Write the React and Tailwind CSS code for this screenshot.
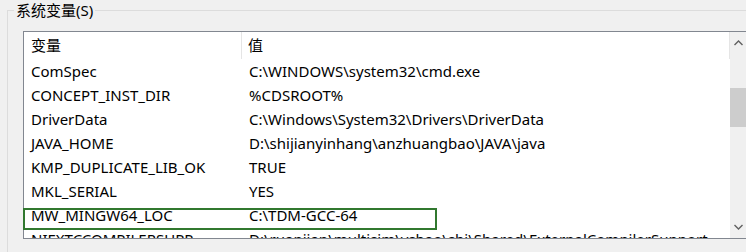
import React from "react";

const rows = [
  ["ComSpec", "C:\\WINDOWS\\system32\\cmd.exe"],
  ["CONCEPT_INST_DIR", "%CDSROOT%"],
  ["DriverData", "C:\\Windows\\System32\\Drivers\\DriverData"],
  ["JAVA_HOME", "D:\\shijianyinhang\\anzhuangbao\\JAVA\\java"],
  ["KMP_DUPLICATE_LIB_OK", "TRUE"],
  ["MKL_SERIAL", "YES"],
  ["MW_MINGW64_LOC", "C:\\TDM-GCC-64"],
  ["NIEXTCCOMPILERSUPP", "D:\\ruanjian\\multisim\\vsbao\\shi\\Shared\\ExternalCompilerSupport"],
];

const font = { fontFamily: '"Noto Sans", "Noto Sans CJK SC", sans-serif' };

export default function App() {
  return (
    <div className="w-[746px] h-[252px] bg-[#f0f0f0] overflow-hidden relative text-[15px] text-black" style={font}>
      <div className="absolute left-[7px] top-[10px] w-[760px] h-[260px] border border-[#dcdcdc]" />
      <div className="absolute left-[14px] top-0 px-[2px] bg-[#f0f0f0] leading-[20px]">系统变量(S)</div>
      <div className="absolute left-[23px] top-[31px] w-[740px] h-[208px] border border-[#828790] bg-white flex">
        <div className="w-[706px] flex flex-col overflow-hidden">
          <div className="h-[27px] shrink-0 flex items-center">
            <div className="w-[218px] pl-[7px] border-r border-[#e5e5e5] h-full flex items-center">变量</div>
            <div className="flex-1 pl-[6px] border-r border-[#e5e5e5] h-full flex items-center">值</div>
          </div>
          {rows.map(([k, v], i) => (
            <div key={i} className="h-[24px] shrink-0 flex items-center whitespace-nowrap">
              <div className="w-[219px] pl-[7px] shrink-0">{k}</div>
              <div className="pl-[6px]">{v}</div>
            </div>
          ))}
        </div>
        <div className="w-[17px] h-full bg-[#f0f0f0] flex flex-col items-center">
          <div className="h-[22px] w-full flex items-center justify-center text-[#606060]">
            <svg width="9" height="6" viewBox="0 0 9 6"><path d="M0.5 5 L4.5 1 L8.5 5" fill="none" stroke="#606060" strokeWidth="1.4" /></svg>
          </div>
          <div className="h-[34px]" />
          <div className="w-full h-[39px] bg-[#cdcdcd]" />
          <div className="flex-1" />
          <div className="h-[22px] w-full flex items-center justify-center">
            <svg width="9" height="6" viewBox="0 0 9 6"><path d="M0.5 1 L4.5 5 L8.5 1" fill="none" stroke="#606060" strokeWidth="1.4" /></svg>
          </div>
        </div>
      </div>
      <div className="absolute left-[23px] top-[208px] w-[414px] h-[22px] border-2 border-[#31782f]" />
    </div>
  );
}
